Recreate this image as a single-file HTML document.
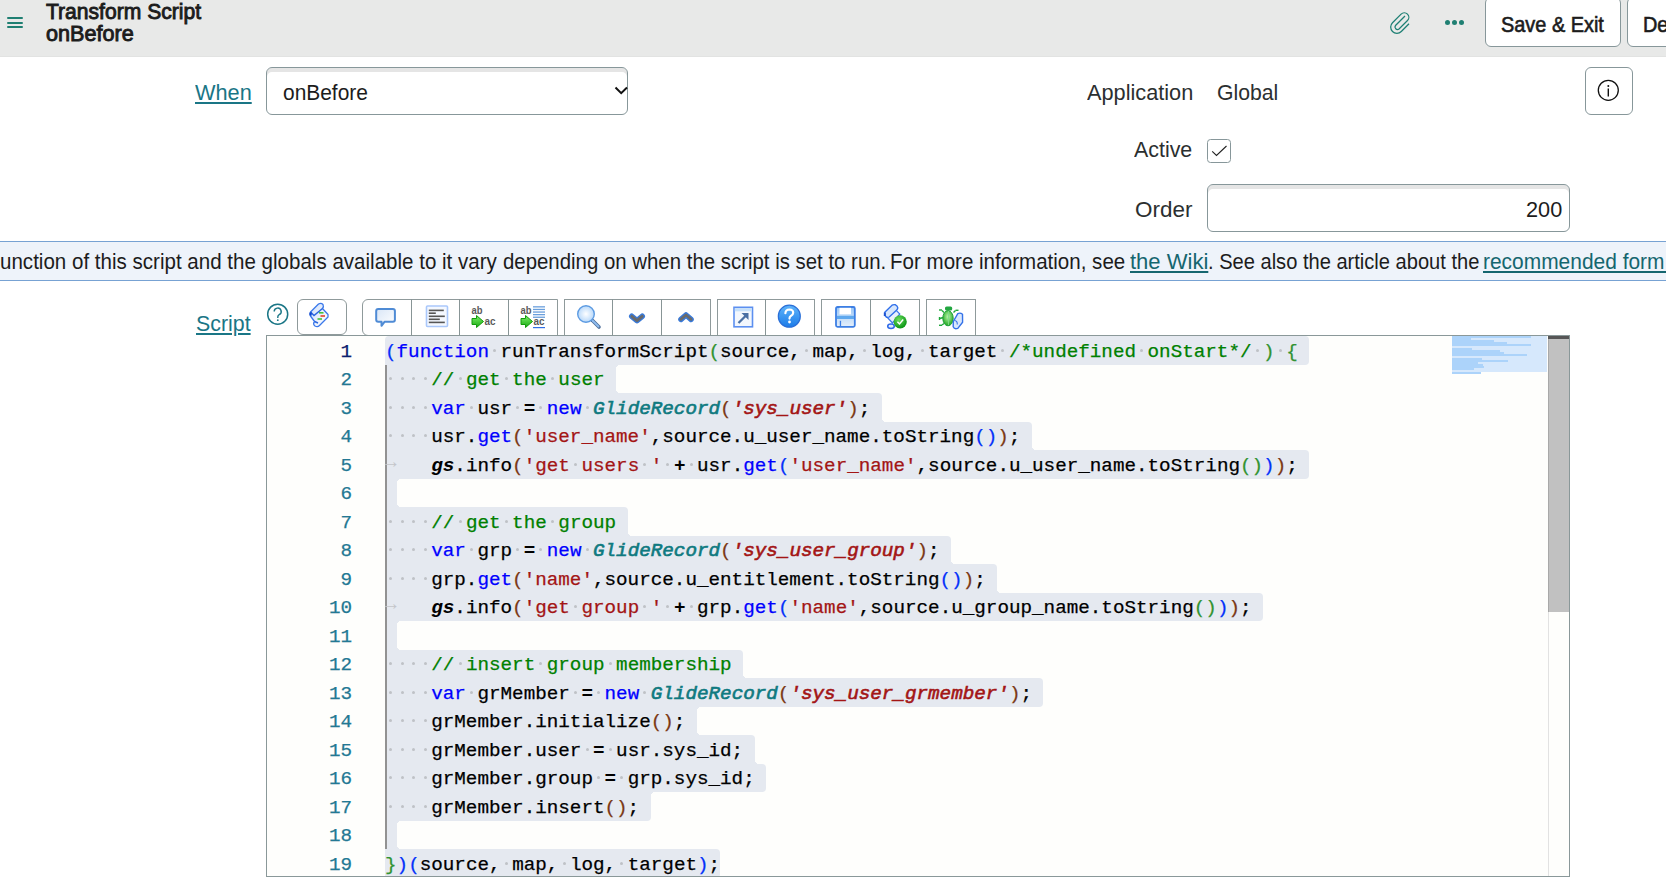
<!DOCTYPE html>
<html><head><meta charset="utf-8">
<style>
*{box-sizing:border-box;margin:0;padding:0}
html,body{width:1666px;height:883px;overflow:hidden;background:#fff;font-family:"Liberation Sans",sans-serif;color:#2e3435}
.a{position:absolute;white-space:nowrap}
.t{position:absolute;white-space:nowrap;transform-origin:0 0;line-height:30px;font-size:21px}
#hdr{position:absolute;left:0;top:0;width:1666px;height:57px;background:#e8e9e8;border-bottom:1px solid #e2e3e2}
.ham{position:absolute;left:7px;width:16px;height:2px;background:#1f7f72;border-radius:1px}
.btn{position:absolute;background:#fff;border:1.5px solid #87979a;border-radius:6px}
.inp{position:absolute;background:#fff;border:1.5px solid #87979a;border-radius:6px;box-shadow:inset 0 4px 0 #e5e5e5}
.lnk{color:#1a7686;text-decoration:underline;text-decoration-thickness:2px;text-underline-offset:2px}
.tb{position:absolute;top:299px;height:37px;border:1.5px solid #8f9a9b;background:#fff}
.tbd{position:absolute;top:299px;width:1.2px;height:36px;background:#889596}
#ed{position:absolute;left:266px;top:335px;width:1304px;height:542px;border:1.5px solid #8a9899;background:#fefefc;overflow:hidden}
.sel{position:absolute;background:#e5e9f0}
.cc{position:absolute;width:4px;height:4px}
.cc.tl{background:radial-gradient(circle at 100% 100%,transparent 4px,#e5e9f0 4px)}
.cc.bl{background:radial-gradient(circle at 100% 0,transparent 4px,#e5e9f0 4px)}
.d{position:absolute;width:3px;height:3px;border-radius:50%;background:#bfc2c6}
#code{position:absolute;left:0;top:0;width:1666px;height:883px;font-family:"Liberation Mono",monospace;font-size:19.25px;color:#000;-webkit-text-stroke:0.25px}
.ln{position:absolute;left:385px;height:28.5px;line-height:28.5px;white-space:pre;margin-top:1.6px}
.gn{position:absolute;left:300px;width:52px;text-align:right;height:28.5px;line-height:28.5px;color:#237893;margin-top:1.6px}
.gn.act{color:#0b216f}
.k{color:#0000ff}.c{color:#008000}.s{color:#a31515}.ts{color:#a31515;font-style:italic;-webkit-text-stroke:0.6px #a31515}
.gr{color:#0f7a80;font-style:italic;-webkit-text-stroke:0.65px #0f7a80}.gs{font-style:italic;font-weight:bold;-webkit-text-stroke:0}.op{font-weight:bold;-webkit-text-stroke:0}
.b1{color:#0431fa}.b2{color:#319331}.b3{color:#7b3814}
.tab{color:#c4c6ca;position:relative;top:-3px;-webkit-text-stroke:0}
.mml{position:absolute;left:1452px;height:2px;background:#acd3fa}
</style></head><body>
<div id="hdr">
  <div class="ham" style="top:17px"></div><div class="ham" style="top:22px"></div><div class="ham" style="top:26px"></div>
  <svg class="a" style="left:1388px;top:8px" width="24" height="26" viewBox="0 0 24 26"><path d="M17 8 L7.5 17.5 a2.5 2.5 0 0 0 3.5 3.5 L19.5 12.5 a4.5 4.5 0 0 0 -6.4 -6.4 L4.5 14.7 a6.2 6.2 0 0 0 8.8 8.8 L21 15.8" fill="none" stroke="#1d7f73" stroke-width="1.25"/></svg>
  <div class="a" style="left:1445px;top:20px;width:5px;height:5px;border-radius:50%;background:#1f7f72"></div>
  <div class="a" style="left:1452px;top:20px;width:5px;height:5px;border-radius:50%;background:#1f7f72"></div>
  <div class="a" style="left:1459px;top:20px;width:5px;height:5px;border-radius:50%;background:#1f7f72"></div>
  <div class="btn" style="left:1485px;top:-3px;width:136px;height:50px"></div>
  <div class="btn" style="left:1627px;top:-3px;width:100px;height:50px"></div>
</div>

<div class="inp" style="left:266px;top:67px;width:362px;height:48px"></div>
<svg class="a" style="left:613px;top:85px" width="16" height="12" viewBox="0 0 16 12"><path d="M2.5 2.5 L8.2 8.2 L14 2.5" fill="none" stroke="#111" stroke-width="2"/></svg>

<div class="btn" style="left:1585px;top:67px;width:48px;height:48px"></div>
<svg class="a" style="left:1596px;top:78px" width="25" height="25" viewBox="0 0 25 25"><circle cx="12.3" cy="12.3" r="10" fill="none" stroke="#111" stroke-width="1.3"/><circle cx="12.3" cy="8" r="1" fill="#111"/><rect x="11.6" y="10.5" width="1.4" height="8" fill="#111"/></svg>

<div class="a" style="left:1207px;top:139px;width:24px;height:24px;border:1.5px solid #87979a;border-radius:3.5px"></div>
<svg class="a" style="left:1207px;top:139px" width="24" height="24" viewBox="0 0 24 24"><path d="M5.2 12.4 L9.5 16.5 L19.5 7" fill="none" stroke="#222" stroke-width="1.1"/></svg>

<div class="inp" style="left:1207px;top:184px;width:363px;height:48px"></div>

<div class="a" style="left:0;top:241px;width:1666px;height:40px;background:#eef3fa;border-top:1.5px solid #77a2d3;border-bottom:1.5px solid #77a2d3"></div>

<svg class="a" style="left:266px;top:303px" width="24" height="24" viewBox="0 0 24 24"><circle cx="11.7" cy="11.2" r="10" fill="none" stroke="#1a7686" stroke-width="1.5"/><path d="M8.2 8.6 a3.5 3.5 0 1 1 5 3.1 c-1 .5 -1.4 1.1 -1.4 2.2 v1" fill="none" stroke="#1a7686" stroke-width="1.4"/><circle cx="11.8" cy="17.2" r=".9" fill="#1a7686"/></svg>

<div class="tb" style="left:297px;width:50px;height:36px;border-radius:6px"></div>

<div class="tb" style="left:362px;width:196px;border-radius:6px 0 0 6px"></div>
<div class="tbd" style="left:411px"></div><div class="tbd" style="left:459.2px"></div><div class="tbd" style="left:508px"></div>
<div class="tb" style="left:564px;width:147px"></div>
<div class="tbd" style="left:612px"></div><div class="tbd" style="left:660.8px"></div>
<div class="tb" style="left:717px;width:98px"></div>
<div class="tbd" style="left:765px"></div>
<div class="tb" style="left:821px;width:99px"></div>
<div class="tbd" style="left:870px"></div>
<div class="tb" style="left:926px;width:50px"></div>


<svg class="a" style="left:300px;top:300px" width="45" height="34" viewBox="0 0 45 34">
 <defs><linearGradient id="scg" x1="0" y1="0" x2="1" y2="1"><stop offset="0" stop-color="#cfe0fb"/><stop offset="1" stop-color="#ffffff"/></linearGradient></defs>
 <path d="M10.5 12 L18.5 4 Q21 2.5 23 4.5 Q24 6.5 22.5 8.5 L28 14.5 L28 17 L19.5 25.5 Q17.5 27.5 15 26 Q12.5 24 14.5 21.5 L10.5 16 Z" fill="url(#scg)" stroke="#3a78ea" stroke-width="1.3" stroke-linejoin="round"/>
 <path d="M10.5 12 L14 15.5 L22.5 8.5" fill="none" stroke="#2a66e0" stroke-width="1.5"/>
 <path d="M10.5 12.5 L10.5 15.5" stroke="#0d48d0" stroke-width="2.4"/>
 <path d="M14.5 21.5 L18 23" stroke="#2a66e0" stroke-width="1.4"/>
 <rect x="19" y="12" width="4.5" height="1.6" fill="#46c43b"/>
 <rect x="20.5" y="15.2" width="4.5" height="1.6" fill="#e2442a"/>
 <rect x="17.5" y="18.2" width="4.5" height="1.6" fill="#46c43b"/>
</svg>
<svg class="a" style="left:362px;top:300px" width="200" height="34" viewBox="0 0 200 34">
 <defs>
  <linearGradient id="bub" x1="0" y1="0" x2="1" y2="1"><stop offset="0" stop-color="#d9e6f7"/><stop offset="1" stop-color="#ffffff"/></linearGradient>
  <linearGradient id="grn" x1="0" y1="0" x2="0" y2="1"><stop offset="0" stop-color="#7ef26a"/><stop offset="1" stop-color="#18a810"/></linearGradient>
 </defs>
 <path d="M16.2 9.1 H30.9 Q32.9 9.1 32.9 11.1 V19.8 Q32.9 21.8 30.9 21.8 H22.5 L19.5 25.8 L19.5 21.8 H16.2 Q14.2 21.8 14.2 19.8 V11.1 Q14.2 9.1 16.2 9.1 Z" fill="url(#bub)" stroke="#4f8bd5" stroke-width="2" stroke-linejoin="round"/>
 <rect x="64.5" y="6" width="21" height="20.5" rx="1" fill="#f4f8ff" stroke="#aac8fb" stroke-width="1.6"/>
 <g fill="#565656"><rect x="66.8" y="9.6" width="15" height="1.6"/><rect x="66.8" y="12.4" width="7" height="1.6"/><rect x="66.8" y="15.5" width="16" height="1.6"/><rect x="66.8" y="18.5" width="11" height="1.6"/><rect x="66.8" y="21.6" width="16" height="1.6"/></g>
 <g font-family="Liberation Sans" font-weight="bold" fill="#5a5a5a" font-size="11.5">
  <text x="109.5" y="14.2" transform="scale(1 1)" textLength="11" lengthAdjust="spacingAndGlyphs">ab</text>
  <text x="122.5" y="24.5" textLength="11" lengthAdjust="spacingAndGlyphs">ac</text>
  <text x="158.5" y="14.2" textLength="11" lengthAdjust="spacingAndGlyphs">ab</text>
  <text x="171.5" y="24.5" textLength="11" lengthAdjust="spacingAndGlyphs">ac</text>
 </g>
 <path d="M110 18.5 H114.5 V15.5 L121.5 21.5 L114.5 27.5 V24.5 H110 Z" fill="url(#grn)" stroke="#129a0b" stroke-width="1"/>
 <path d="M159 18.5 H163.5 V15.5 L170.5 21.5 L163.5 27.5 V24.5 H159 Z" fill="url(#grn)" stroke="#129a0b" stroke-width="1"/>
 <g fill="#6a9fdc"><rect x="171" y="6.2" width="12" height="1.3"/><rect x="171" y="8.8" width="12" height="1.3"/><rect x="171" y="11.4" width="12" height="1.3"/><rect x="171" y="14" width="12" height="1.3"/><rect x="171" y="16.6" width="12" height="1.3"/></g>
 <rect x="171" y="27" width="12" height="1.2" fill="#2f6fe6"/>
</svg>
<svg class="a" style="left:564px;top:300px" width="150" height="34" viewBox="0 0 150 34">
 <defs><radialGradient id="mag" cx="0.5" cy="0.5" r="0.5"><stop offset="0" stop-color="#ffffff"/><stop offset="1" stop-color="#b7d8fa"/></radialGradient>
 <linearGradient id="hlp" x1="0" y1="0" x2="0" y2="1"><stop offset="0" stop-color="#63b8fb"/><stop offset="1" stop-color="#1a7ae8"/></linearGradient></defs>
 <path d="M28 20 L35 27" stroke="#4f6f9a" stroke-width="3.6" stroke-linecap="round"/>
 <path d="M28.5 20.5 L34.5 26.5" stroke="#8fbdf0" stroke-width="1.8" stroke-linecap="round"/>
 <circle cx="22" cy="14" r="8.3" fill="url(#mag)" stroke="#5d9be2" stroke-width="1.4"/>
 <path d="M67.8 16.3 L73 20.6 L78.2 16.3" fill="none" stroke="#3a7ad8" stroke-width="5.6" stroke-linejoin="round" stroke-linecap="round"/>
 <path d="M67.8 16.3 L73 20.6 L78.2 16.3" fill="none" stroke="#6a6a6a" stroke-width="2.8" stroke-linejoin="round" stroke-linecap="round"/>
 <path d="M117 19.3 L122 15 L127 19.3" fill="none" stroke="#3a7ad8" stroke-width="5.6" stroke-linejoin="round" stroke-linecap="round"/>
 <path d="M117 19.3 L122 15 L127 19.3" fill="none" stroke="#6a6a6a" stroke-width="2.8" stroke-linejoin="round" stroke-linecap="round"/>
</svg>
<svg class="a" style="left:717px;top:300px" width="100" height="34" viewBox="0 0 100 34">
 <rect x="17" y="7.3" width="18.5" height="19.5" fill="#f3f7fd" stroke="#5c8ff0" stroke-width="1.6"/>
 <rect x="17.8" y="8.1" width="17" height="3.2" fill="#c6e0fa"/>
 <path d="M21.5 23 L29 15.5" stroke="#4a6fa3" stroke-width="2.3"/>
 <path d="M24.5 13 H31.5 V20 Z" fill="#4a6fa3"/>
 <circle cx="72.3" cy="16.2" r="11" fill="url(#hlp2)" stroke="#2a6fd8" stroke-width="1.2"/>
 <defs><linearGradient id="hlp2" x1="0" y1="0" x2="0" y2="1"><stop offset="0" stop-color="#5fb5fb"/><stop offset="1" stop-color="#1b7be8"/></linearGradient></defs>
 <path d="M68.4 13.2 Q68.6 9.5 72.4 9.5 Q76.2 9.6 76.2 12.8 Q76.2 14.8 73.8 16 Q72.5 16.7 72.5 18.6" fill="none" stroke="#fff" stroke-width="2.2" stroke-linecap="round"/>
 <circle cx="72.5" cy="22" r="1.4" fill="#fff"/>
</svg>
<svg class="a" style="left:821px;top:300px" width="155" height="34" viewBox="0 0 155 34">
 <defs><linearGradient id="flp" x1="0" y1="0" x2="0" y2="1"><stop offset="0" stop-color="#9cc8f7"/><stop offset="1" stop-color="#e5effa"/></linearGradient>
 <radialGradient id="chk" cx="0.4" cy="0.35" r="0.6"><stop offset="0" stop-color="#6ee060"/><stop offset="1" stop-color="#119a1a"/></radialGradient>
 <radialGradient id="bug" cx="0.5" cy="0.4" r="0.6"><stop offset="0" stop-color="#b8f5a8"/><stop offset="1" stop-color="#1da71d"/></radialGradient></defs>
 <rect x="15" y="7" width="18.8" height="19.8" rx="1.5" fill="url(#flp)" stroke="#3d7fe4" stroke-width="1.8"/>
 <rect x="18.5" y="7.8" width="11.5" height="6.5" fill="#fff"/>
 <rect x="16" y="15.8" width="17" height="3.2" fill="#5ea8ee"/>
 <rect x="18.8" y="20.8" width="1.3" height="5.2" fill="#3d7fe4"/>
 <path d="M65 16 L71.5 23 L78.8 14 L75 10.2" fill="#e8f0fc" stroke="#3a76ea" stroke-width="1.2"/>
 <path d="M63.8 12.2 L71 5.2 Q72.5 4.3 74.5 4.8 Q76.5 5.8 76.8 7.8 Q76.6 9.2 75.5 10.2 L68.2 17 Q66.8 17.8 65.2 17 Q63.6 15.8 63.8 12.2 Z" fill="#d6e6fc" stroke="#3170ea" stroke-width="1.4"/>
 <path d="M63.8 12.5 V16" stroke="#1d52d0" stroke-width="2"/>
 <ellipse cx="70" cy="26.3" rx="3.3" ry="2.2" fill="#dfeafc" stroke="#2e6ae8" stroke-width="1.5"/>
 <circle cx="79.2" cy="21.8" r="6.6" fill="url(#chk)"/>
 <path d="M76.4 21.8 L78.5 24 L82.2 19.6" fill="none" stroke="#fff" stroke-width="1.5"/>
 <g stroke="#1fa83a" stroke-width="1.4"><path d="M118 10 H121"/><path d="M134.5 10.3 H137.5"/><path d="M118.5 17 V20"/><path d="M118 25.3 H121"/><path d="M121 10.5 L123 12.5"/><path d="M119 18.5 L122 17.5"/><path d="M121 25 L123 23.5"/><path d="M134.5 10.5 L132.5 12.5"/></g>
 <rect x="124" y="6.5" width="7.2" height="4" rx="1.6" fill="#22a640"/>
 <ellipse cx="127" cy="18.2" rx="5.2" ry="7.6" fill="url(#bug)" stroke="#1fa03a" stroke-width="1"/>
 <path d="M127.5 11 V25" stroke="#7fd98a" stroke-width="0.9"/>
 <path d="M132.3 21.5 L136.8 13.6 Q139.3 12.4 141.5 14.2 L141.6 22.2 L136.8 28.4 Q133.3 29.6 132.2 26.8 Z" fill="#d9e7fc" stroke="#3572e8" stroke-width="1.4" stroke-linejoin="round"/>
 <path d="M133.5 20.5 Q136.5 20.8 136.3 24.5" fill="none" stroke="#3572e8" stroke-width="1.1"/>
</svg>

<div id="ed"></div>
<div style="position:absolute;left:0;top:0;width:1666px;height:876px;overflow:hidden">
<div class="sel" style="left:385.00px;top:336.00px;width:924.00px;height:28.50px;border-radius:4px 4px 4px 0px"></div><div class="sel" style="left:385.00px;top:364.50px;width:231.00px;height:28.50px;border-radius:0px 0px 0px 0px"></div><div class="cc tl" style="left:616.00px;top:364.50px"></div><div class="cc bl" style="left:616.00px;top:389.00px"></div><div class="sel" style="left:385.00px;top:393.00px;width:496.65px;height:28.50px;border-radius:0px 4px 0px 0px"></div><div class="cc bl" style="left:881.65px;top:417.50px"></div><div class="sel" style="left:385.00px;top:421.50px;width:646.80px;height:28.50px;border-radius:0px 4px 0px 0px"></div><div class="cc bl" style="left:1031.80px;top:446.00px"></div><div class="sel" style="left:385.00px;top:450.00px;width:924.00px;height:28.50px;border-radius:0px 4px 4px 0px"></div><div class="sel" style="left:385.00px;top:478.50px;width:11.55px;height:28.50px;border-radius:0px 0px 0px 0px"></div><div class="cc tl" style="left:396.55px;top:478.50px"></div><div class="cc bl" style="left:396.55px;top:503.00px"></div><div class="sel" style="left:385.00px;top:507.00px;width:242.55px;height:28.50px;border-radius:0px 4px 0px 0px"></div><div class="cc bl" style="left:627.55px;top:531.50px"></div><div class="sel" style="left:385.00px;top:535.50px;width:565.95px;height:28.50px;border-radius:0px 4px 0px 0px"></div><div class="cc bl" style="left:950.95px;top:560.00px"></div><div class="sel" style="left:385.00px;top:564.00px;width:612.15px;height:28.50px;border-radius:0px 4px 0px 0px"></div><div class="cc bl" style="left:997.15px;top:588.50px"></div><div class="sel" style="left:385.00px;top:592.50px;width:877.80px;height:28.50px;border-radius:0px 4px 4px 0px"></div><div class="sel" style="left:385.00px;top:621.00px;width:11.55px;height:28.50px;border-radius:0px 0px 0px 0px"></div><div class="cc tl" style="left:396.55px;top:621.00px"></div><div class="cc bl" style="left:396.55px;top:645.50px"></div><div class="sel" style="left:385.00px;top:649.50px;width:358.05px;height:28.50px;border-radius:0px 4px 0px 0px"></div><div class="cc bl" style="left:743.05px;top:674.00px"></div><div class="sel" style="left:385.00px;top:678.00px;width:658.35px;height:28.50px;border-radius:0px 4px 4px 0px"></div><div class="sel" style="left:385.00px;top:706.50px;width:311.85px;height:28.50px;border-radius:0px 0px 0px 0px"></div><div class="cc tl" style="left:696.85px;top:706.50px"></div><div class="cc bl" style="left:696.85px;top:731.00px"></div><div class="sel" style="left:385.00px;top:735.00px;width:369.60px;height:28.50px;border-radius:0px 4px 0px 0px"></div><div class="cc bl" style="left:754.60px;top:759.50px"></div><div class="sel" style="left:385.00px;top:763.50px;width:381.15px;height:28.50px;border-radius:0px 4px 4px 0px"></div><div class="sel" style="left:385.00px;top:792.00px;width:265.65px;height:28.50px;border-radius:0px 0px 4px 0px"></div><div class="cc tl" style="left:650.65px;top:792.00px"></div><div class="sel" style="left:385.00px;top:820.50px;width:11.55px;height:28.50px;border-radius:0px 0px 0px 0px"></div><div class="cc tl" style="left:396.55px;top:820.50px"></div><div class="cc bl" style="left:396.55px;top:845.00px"></div><div class="sel" style="left:385.00px;top:849.00px;width:334.95px;height:28.50px;border-radius:0px 4px 4px 0px"></div>
<div class="a" style="left:385px;top:364.5px;width:1.5px;height:484.5px;background:#929292"></div>
<i class="d" style="left:493.23px;top:348.75px"></i><i class="d" style="left:805.08px;top:348.75px"></i><i class="d" style="left:862.83px;top:348.75px"></i><i class="d" style="left:920.58px;top:348.75px"></i><i class="d" style="left:1001.43px;top:348.75px"></i><i class="d" style="left:1140.03px;top:348.75px"></i><i class="d" style="left:1255.53px;top:348.75px"></i><i class="d" style="left:1278.62px;top:348.75px"></i><i class="d" style="left:389.27px;top:377.25px"></i><i class="d" style="left:400.82px;top:377.25px"></i><i class="d" style="left:412.38px;top:377.25px"></i><i class="d" style="left:423.93px;top:377.25px"></i><i class="d" style="left:458.57px;top:377.25px"></i><i class="d" style="left:504.77px;top:377.25px"></i><i class="d" style="left:550.98px;top:377.25px"></i><i class="d" style="left:389.27px;top:405.75px"></i><i class="d" style="left:400.82px;top:405.75px"></i><i class="d" style="left:412.38px;top:405.75px"></i><i class="d" style="left:423.93px;top:405.75px"></i><i class="d" style="left:470.12px;top:405.75px"></i><i class="d" style="left:516.33px;top:405.75px"></i><i class="d" style="left:539.42px;top:405.75px"></i><i class="d" style="left:585.62px;top:405.75px"></i><i class="d" style="left:389.27px;top:434.25px"></i><i class="d" style="left:400.82px;top:434.25px"></i><i class="d" style="left:412.38px;top:434.25px"></i><i class="d" style="left:423.93px;top:434.25px"></i><i class="d" style="left:574.08px;top:462.75px"></i><i class="d" style="left:643.38px;top:462.75px"></i><i class="d" style="left:666.48px;top:462.75px"></i><i class="d" style="left:689.58px;top:462.75px"></i><i class="d" style="left:389.27px;top:519.75px"></i><i class="d" style="left:400.82px;top:519.75px"></i><i class="d" style="left:412.38px;top:519.75px"></i><i class="d" style="left:423.93px;top:519.75px"></i><i class="d" style="left:458.57px;top:519.75px"></i><i class="d" style="left:504.77px;top:519.75px"></i><i class="d" style="left:550.98px;top:519.75px"></i><i class="d" style="left:389.27px;top:548.25px"></i><i class="d" style="left:400.82px;top:548.25px"></i><i class="d" style="left:412.38px;top:548.25px"></i><i class="d" style="left:423.93px;top:548.25px"></i><i class="d" style="left:470.12px;top:548.25px"></i><i class="d" style="left:516.33px;top:548.25px"></i><i class="d" style="left:539.42px;top:548.25px"></i><i class="d" style="left:585.62px;top:548.25px"></i><i class="d" style="left:389.27px;top:576.75px"></i><i class="d" style="left:400.82px;top:576.75px"></i><i class="d" style="left:412.38px;top:576.75px"></i><i class="d" style="left:423.93px;top:576.75px"></i><i class="d" style="left:574.08px;top:605.25px"></i><i class="d" style="left:643.38px;top:605.25px"></i><i class="d" style="left:666.48px;top:605.25px"></i><i class="d" style="left:689.58px;top:605.25px"></i><i class="d" style="left:389.27px;top:662.25px"></i><i class="d" style="left:400.82px;top:662.25px"></i><i class="d" style="left:412.38px;top:662.25px"></i><i class="d" style="left:423.93px;top:662.25px"></i><i class="d" style="left:458.57px;top:662.25px"></i><i class="d" style="left:539.42px;top:662.25px"></i><i class="d" style="left:608.73px;top:662.25px"></i><i class="d" style="left:389.27px;top:690.75px"></i><i class="d" style="left:400.82px;top:690.75px"></i><i class="d" style="left:412.38px;top:690.75px"></i><i class="d" style="left:423.93px;top:690.75px"></i><i class="d" style="left:470.12px;top:690.75px"></i><i class="d" style="left:574.08px;top:690.75px"></i><i class="d" style="left:597.17px;top:690.75px"></i><i class="d" style="left:643.38px;top:690.75px"></i><i class="d" style="left:389.27px;top:719.25px"></i><i class="d" style="left:400.82px;top:719.25px"></i><i class="d" style="left:412.38px;top:719.25px"></i><i class="d" style="left:423.93px;top:719.25px"></i><i class="d" style="left:389.27px;top:747.75px"></i><i class="d" style="left:400.82px;top:747.75px"></i><i class="d" style="left:412.38px;top:747.75px"></i><i class="d" style="left:423.93px;top:747.75px"></i><i class="d" style="left:585.62px;top:747.75px"></i><i class="d" style="left:608.73px;top:747.75px"></i><i class="d" style="left:389.27px;top:776.25px"></i><i class="d" style="left:400.82px;top:776.25px"></i><i class="d" style="left:412.38px;top:776.25px"></i><i class="d" style="left:423.93px;top:776.25px"></i><i class="d" style="left:597.17px;top:776.25px"></i><i class="d" style="left:620.27px;top:776.25px"></i><i class="d" style="left:389.27px;top:804.75px"></i><i class="d" style="left:400.82px;top:804.75px"></i><i class="d" style="left:412.38px;top:804.75px"></i><i class="d" style="left:423.93px;top:804.75px"></i><i class="d" style="left:504.77px;top:861.75px"></i><i class="d" style="left:562.52px;top:861.75px"></i><i class="d" style="left:620.27px;top:861.75px"></i>
<div id="code">
<div class="gn act" style="top:336.00px">1</div><div class="gn" style="top:364.50px">2</div><div class="gn" style="top:393.00px">3</div><div class="gn" style="top:421.50px">4</div><div class="gn" style="top:450.00px">5</div><div class="gn" style="top:478.50px">6</div><div class="gn" style="top:507.00px">7</div><div class="gn" style="top:535.50px">8</div><div class="gn" style="top:564.00px">9</div><div class="gn" style="top:592.50px">10</div><div class="gn" style="top:621.00px">11</div><div class="gn" style="top:649.50px">12</div><div class="gn" style="top:678.00px">13</div><div class="gn" style="top:706.50px">14</div><div class="gn" style="top:735.00px">15</div><div class="gn" style="top:763.50px">16</div><div class="gn" style="top:792.00px">17</div><div class="gn" style="top:820.50px">18</div><div class="gn" style="top:849.00px">19</div>
<div class="ln" style="top:336.00px"><span class="b1">(</span><span class="k">function</span> <span class="n">runTransformScript</span><span class="b2">(</span><span class="n">source,</span> <span class="n">map,</span> <span class="n">log,</span> <span class="n">target</span> <span class="c">/*undefined</span> <span class="c">onStart*/</span> <span class="b2">)</span> <span class="b2">{</span></div><div class="ln" style="top:364.50px">    <span class="c">//</span> <span class="c">get</span> <span class="c">the</span> <span class="c">user</span></div><div class="ln" style="top:393.00px">    <span class="k">var</span> <span class="n">usr</span> <span class="op">=</span> <span class="k">new</span> <span class="gr">GlideRecord</span><span class="b3">(</span><span class="ts">&#x27;sys_user&#x27;</span><span class="b3">)</span><span class="n">;</span></div><div class="ln" style="top:421.50px">    <span class="n">usr.</span><span class="k">get</span><span class="b3">(</span><span class="s">&#x27;user_name&#x27;</span><span class="n">,source.u_user_name.toString</span><span class="b1">()</span><span class="b3">)</span><span class="n">;</span></div><div class="ln" style="top:450.00px"><span class="tab">→</span>   <span class="gs">gs</span><span class="n">.info</span><span class="b3">(</span><span class="s">&#x27;get</span> <span class="s">users</span> <span class="s">&#x27;</span> <span class="op">+</span> <span class="n">usr.</span><span class="k">get</span><span class="b1">(</span><span class="s">&#x27;user_name&#x27;</span><span class="n">,source.u_user_name.toString</span><span class="b2">()</span><span class="b1">)</span><span class="b3">)</span><span class="n">;</span></div><div class="ln" style="top:478.50px"></div><div class="ln" style="top:507.00px">    <span class="c">//</span> <span class="c">get</span> <span class="c">the</span> <span class="c">group</span></div><div class="ln" style="top:535.50px">    <span class="k">var</span> <span class="n">grp</span> <span class="op">=</span> <span class="k">new</span> <span class="gr">GlideRecord</span><span class="b3">(</span><span class="ts">&#x27;sys_user_group&#x27;</span><span class="b3">)</span><span class="n">;</span></div><div class="ln" style="top:564.00px">    <span class="n">grp.</span><span class="k">get</span><span class="b3">(</span><span class="s">&#x27;name&#x27;</span><span class="n">,source.u_entitlement.toString</span><span class="b1">()</span><span class="b3">)</span><span class="n">;</span></div><div class="ln" style="top:592.50px"><span class="tab">→</span>   <span class="gs">gs</span><span class="n">.info</span><span class="b3">(</span><span class="s">&#x27;get</span> <span class="s">group</span> <span class="s">&#x27;</span> <span class="op">+</span> <span class="n">grp.</span><span class="k">get</span><span class="b1">(</span><span class="s">&#x27;name&#x27;</span><span class="n">,source.u_group_name.toString</span><span class="b2">()</span><span class="b1">)</span><span class="b3">)</span><span class="n">;</span></div><div class="ln" style="top:621.00px"></div><div class="ln" style="top:649.50px">    <span class="c">//</span> <span class="c">insert</span> <span class="c">group</span> <span class="c">membership</span></div><div class="ln" style="top:678.00px">    <span class="k">var</span> <span class="n">grMember</span> <span class="op">=</span> <span class="k">new</span> <span class="gr">GlideRecord</span><span class="b3">(</span><span class="ts">&#x27;sys_user_grmember&#x27;</span><span class="b3">)</span><span class="n">;</span></div><div class="ln" style="top:706.50px">    <span class="n">grMember.initialize</span><span class="b3">()</span><span class="n">;</span></div><div class="ln" style="top:735.00px">    <span class="n">grMember.user</span> <span class="op">=</span> <span class="n">usr.sys_id;</span></div><div class="ln" style="top:763.50px">    <span class="n">grMember.group</span> <span class="op">=</span> <span class="n">grp.sys_id;</span></div><div class="ln" style="top:792.00px">    <span class="n">grMember.insert</span><span class="b3">()</span><span class="n">;</span></div><div class="ln" style="top:820.50px"></div><div class="ln" style="top:849.00px"><span class="b2">}</span><span class="b1">)</span><span class="b1">(</span><span class="n">source,</span> <span class="n">map,</span> <span class="n">log,</span> <span class="n">target</span><span class="b1">)</span><span class="n">;</span></div>
</div>
<div class="a" style="left:1452px;top:336px;width:95px;height:36px;background:#d6e8fc"></div>
<div class="mml" style="top:336px;width:79.0px"></div><div class="mml" style="top:338px;width:19.0px"></div><div class="mml" style="top:340px;width:42.0px"></div><div class="mml" style="top:342px;width:55.0px"></div><div class="mml" style="top:344px;width:79.0px"></div><div class="mml" style="top:346px;width:0.0px"></div><div class="mml" style="top:348px;width:20.0px"></div><div class="mml" style="top:350px;width:48.0px"></div><div class="mml" style="top:352px;width:52.0px"></div><div class="mml" style="top:354px;width:75.0px"></div><div class="mml" style="top:356px;width:0.0px"></div><div class="mml" style="top:358px;width:30.0px"></div><div class="mml" style="top:360px;width:56.0px"></div><div class="mml" style="top:362px;width:26.0px"></div><div class="mml" style="top:364px;width:31.0px"></div><div class="mml" style="top:366px;width:32.0px"></div><div class="mml" style="top:368px;width:22.0px"></div><div class="mml" style="top:370px;width:0.0px"></div><div class="mml" style="top:372px;width:29.0px"></div>
<div class="a" style="left:1548px;top:336px;width:1px;height:540px;background:#e2e2e2"></div>
<div class="a" style="left:1548px;top:336px;width:21px;height:276px;background:#c1c1c1;border-left:1px solid #a9a9a9"></div>
<div class="a" style="left:1548px;top:336px;width:21px;height:3px;background:#565656"></div>
</div>
<div class="t" style="left:45.60px;top:-2.60px;font-size:21.5px;font-weight:normal;color:#1c1c1c;transform:scaleX(0.9809);-webkit-text-stroke:0.9px">Transform Script</div><div class="t" style="left:45.60px;top:19.30px;font-size:21.5px;font-weight:normal;color:#1c1c1c;transform:scaleX(1.0046);-webkit-text-stroke:0.9px">onBefore</div><div class="t" style="left:1501.20px;top:9.80px;font-size:21.5px;font-weight:normal;color:#1c1c1c;transform:scaleX(0.9257);-webkit-text-stroke:0.6px">Save &amp; Exit</div><div class="t lnk" style="left:195.30px;top:78.00px;font-size:22px;font-weight:normal;color:#1a7686;transform:scaleX(0.9869)">When</div><div class="t" style="left:282.60px;top:78.00px;font-size:22px;font-weight:normal;color:#1c1c1c;transform:scaleX(0.9511)">onBefore</div><div class="t" style="left:1087.00px;top:78.00px;font-size:22px;font-weight:normal;color:#2b2f30;transform:scaleX(0.9869)">Application</div><div class="t" style="left:1216.54px;top:78.00px;font-size:22px;font-weight:normal;color:#2b2f30;transform:scaleX(0.9642)">Global</div><div class="t" style="left:1134.00px;top:135.00px;font-size:22px;font-weight:normal;color:#2b2f30;transform:scaleX(0.9720)">Active</div><div class="t" style="left:1134.98px;top:195.00px;font-size:22px;font-weight:normal;color:#2b2f30;transform:scaleX(1.0199)">Order</div><div class="t" style="left:1526.21px;top:195.00px;font-size:22px;font-weight:normal;color:#1c1c1c;transform:scaleX(0.9867)">200</div><div class="t lnk" style="left:196.03px;top:309.20px;font-size:22px;font-weight:normal;color:#1a7686;transform:scaleX(0.9706)">Script</div><div class="t" style="left:-0.13px;top:247.00px;font-size:22px;font-weight:normal;color:#1c1c1c;transform:scaleX(0.9340)">unction of this script and the globals available to it vary</div><div class="t" style="left:502.70px;top:247.00px;font-size:22px;font-weight:normal;color:#1c1c1c;transform:scaleX(0.9271)">depending on when the script is set to run.</div><div class="t" style="left:890.17px;top:247.00px;font-size:22px;font-weight:normal;color:#1c1c1c;transform:scaleX(0.9340)">For more information, see</div><div class="t lnk" style="left:1130.30px;top:247.00px;font-size:22px;font-weight:normal;color:#15666f;transform:scaleX(1.0007)">the Wiki</div><div class="t" style="left:1207.67px;top:247.00px;font-size:22px;font-weight:normal;color:#1c1c1c;transform:scaleX(0.9130)">. See also the article about the</div><div class="t lnk" style="left:1483.45px;top:247.00px;font-size:22px;font-weight:normal;color:#15666f;transform:scaleX(0.9516)">recommended form  </div><div class="t" style="left:1643.2px;top:9.8px;font-size:21.5px;color:#1c1c1c;-webkit-text-stroke:0.6px;transform:scaleX(0.9257)">Delete</div>
</body></html>
